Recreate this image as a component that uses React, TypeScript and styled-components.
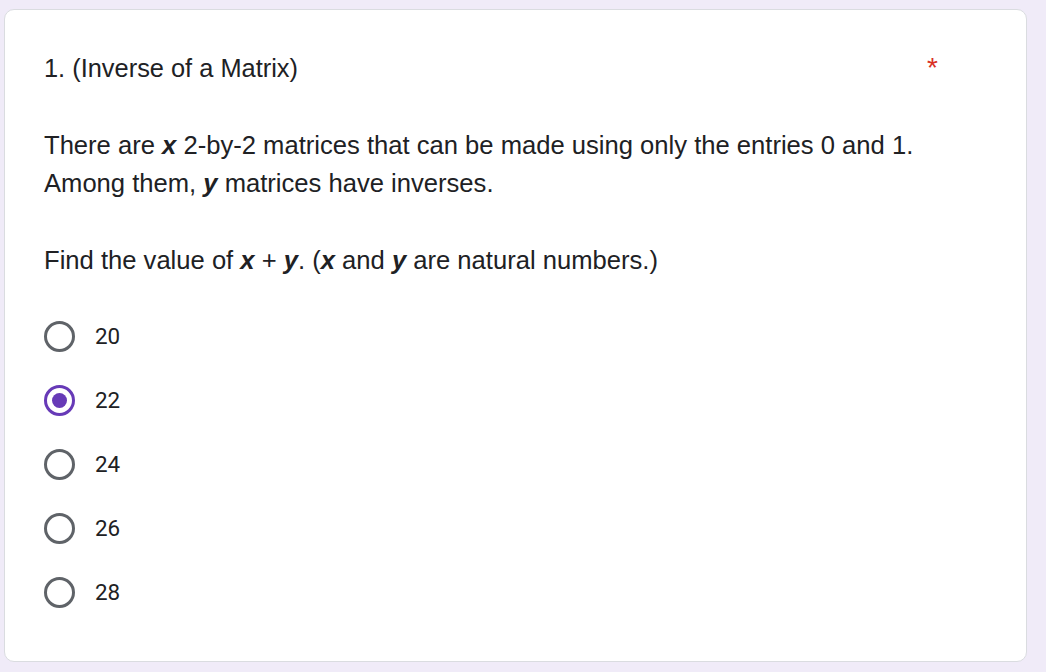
import styled, { createGlobalStyle } from 'styled-components';

const GlobalStyle = createGlobalStyle`
  html, body {
    margin: 0;
    padding: 0;
    background: #f0ebf8;
  }
  body {
    font-family: "Liberation Sans", Arial, sans-serif;
    color: #202124;
  }
`;

const Page = styled.div`
  padding: 9px 19px 10px 4px;
  min-height: 672px;
  box-sizing: border-box;
`;

const Card = styled.div`
  background: #fff;
  border: 1px solid #dadce0;
  border-radius: 10px;
  padding: 42px 39px 37px 39px;
  box-sizing: border-box;
  height: 653px;
`;

const Header = styled.div`
  display: flex;
  justify-content: space-between;
  align-items: flex-start;
  padding-right: 49px;
`;

const Title = styled.div`
  font-size: 25.4px;
  line-height: 32px;
`;

const Required = styled.span`
  color: #d93025;
  font-size: 28px;
  line-height: 31px;
`;

const Body = styled.div`
  margin-top: 42px;
  font-size: 25.6px;
  line-height: 38.4px;
`;

const Para = styled.p`
  margin: 0 0 38.4px 0;

  &:last-child {
    margin-bottom: 0;
  }
`;

const Var = styled.b`
  font-style: italic;
  font-weight: 700;
`;

const Options = styled.div`
  margin-top: 24.6px;
  display: flex;
  flex-direction: column;
`;

const OptionRow = styled.label`
  display: flex;
  align-items: center;
  height: 64px;
  gap: 20px;
  cursor: pointer;
`;

const Radio = styled.span<{ $checked?: boolean }>`
  width: 31px;
  height: 31px;
  box-sizing: border-box;
  border-radius: 50%;
  border: 3px solid ${(p) => (p.$checked ? '#673ab7' : '#5f6368')};
  display: flex;
  align-items: center;
  justify-content: center;
  flex-shrink: 0;

  &::after {
    content: '';
    display: ${(p) => (p.$checked ? 'block' : 'none')};
    width: 15px;
    height: 15px;
    border-radius: 50%;
    background: #673ab7;
  }
`;

const OptionLabel = styled.span`
  font-family: Roboto, "Liberation Sans", sans-serif;
  font-size: 22.4px;
  color: #202124;
`;

const choices = ['20', '22', '24', '26', '28'];

export default function App() {
  const selected = '22';

  return (
    <Page>
      <GlobalStyle />
      <Card>
        <Header>
          <Title>1. (Inverse of a Matrix)</Title>
          <Required>*</Required>
        </Header>

        <Body>
          <Para>
            There are <Var>x</Var> 2-by-2 matrices that can be made using only the entries 0 and 1.
            <br />
            Among them, <Var>y</Var> matrices have inverses.
          </Para>
          <Para>
            Find the value of <Var>x</Var> + <Var>y</Var>. (<Var>x</Var> and <Var>y</Var> are natural numbers.)
          </Para>
        </Body>

        <Options>
          {choices.map((c) => (
            <OptionRow key={c}>
              <Radio $checked={c === selected} />
              <OptionLabel>{c}</OptionLabel>
            </OptionRow>
          ))}
        </Options>
      </Card>
    </Page>
  );
}
